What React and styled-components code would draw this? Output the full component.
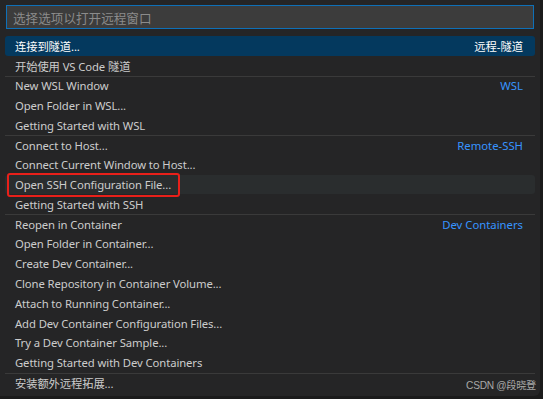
import styled, { createGlobalStyle } from 'styled-components';

const Global = createGlobalStyle`
  html, body {
    margin: 0;
    padding: 0;
    background: #1b1b1b;
  }
  body {
    font-family: "Noto Sans", "Noto Sans CJK SC", sans-serif;
  }
`;

const Panel = styled.div`
  width: 540px;
  height: 396px;
  background: #252526;
  border-radius: 0 0 6px 0;
  box-sizing: border-box;
  padding: 5px 5px 0 5px;
  position: relative;
  overflow: hidden;
`;

const Input = styled.div`
  height: 24px;
  margin: 0 1px 0 1px;
  background: #3c3c3c;
  border: 1px solid #0e70b8;
  box-sizing: border-box;
  display: flex;
  align-items: center;
  padding-left: 6px;
  color: #8b8b8b;
  font-size: 12.6px;
  font-family: "Noto Sans CJK SC", sans-serif;
`;

const List = styled.div`
  margin-top: 7px;
  display: flex;
  flex-direction: column;
`;

const Row = styled.div`
  height: 19.8px;
  display: flex;
  align-items: center;
  justify-content: space-between;
  padding: 0 12px 0 10px;
  box-sizing: border-box;
  border-radius: 3px;
  font-size: 11.3px;
  color: ${p => (p.$active ? '#ffffff' : '#cccccc')};
  background: ${p => (p.$active ? '#04395e' : p.$hover ? '#2a2d2e' : 'transparent')};
  border-top: ${p => (p.$sep ? '1px solid #3a3a3a' : 'none')};
  ${p => p.$sep && 'border-radius: 0;'}
  position: relative;
`;

const Label = styled.span`
  white-space: nowrap;
  letter-spacing: -0.1px;
`;

const Group = styled.span`
  color: ${p => (p.$active ? '#ffffff' : '#3794ff')};
  white-space: nowrap;
`;

const Marked = styled.span`
  position: relative;
  &::after {
    content: '';
    position: absolute;
    left: -8px;
    right: -9px;
    top: -4px;
    bottom: -5px;
    border: 2px solid #e8201a;
    border-radius: 3px;
  }
`;

const Watermark = styled.div`
  position: absolute;
  right: 4px;
  bottom: 4px;
  color: #a8a8a8;
  font-size: 10.2px;
  letter-spacing: -0.3px;
  font-family: "Liberation Sans", "Noto Sans CJK SC", sans-serif;
`;

const items = [
  { label: '连接到隧道...', group: '远程-隧道', active: true },
  { label: '开始使用 VS Code 隧道' },
  { label: 'New WSL Window', group: 'WSL', sep: true },
  { label: 'Open Folder in WSL...' },
  { label: 'Getting Started with WSL' },
  { label: 'Connect to Host...', group: 'Remote-SSH', sep: true },
  { label: 'Connect Current Window to Host...' },
  { label: 'Open SSH Configuration File...', hover: true, marked: true },
  { label: 'Getting Started with SSH' },
  { label: 'Reopen in Container', group: 'Dev Containers', sep: true },
  { label: 'Open Folder in Container...' },
  { label: 'Create Dev Container...' },
  { label: 'Clone Repository in Container Volume...' },
  { label: 'Attach to Running Container...' },
  { label: 'Add Dev Container Configuration Files...' },
  { label: 'Try a Dev Container Sample...' },
  { label: 'Getting Started with Dev Containers' },
  { label: '安装额外远程拓展...', sep: true },
];

export default function App() {
  return (
    <>
      <Global />
      <Panel>
        <Input>选择选项以打开远程窗口</Input>
        <List>
          {items.map(it => (
            <Row key={it.label} $active={it.active} $hover={it.hover} $sep={it.sep}>
              <Label>{it.marked ? <Marked>{it.label}</Marked> : it.label}</Label>
              {it.group && <Group $active={it.active}>{it.group}</Group>}
            </Row>
          ))}
        </List>
        <Watermark>CSDN @段晓登</Watermark>
      </Panel>
    </>
  );
}
